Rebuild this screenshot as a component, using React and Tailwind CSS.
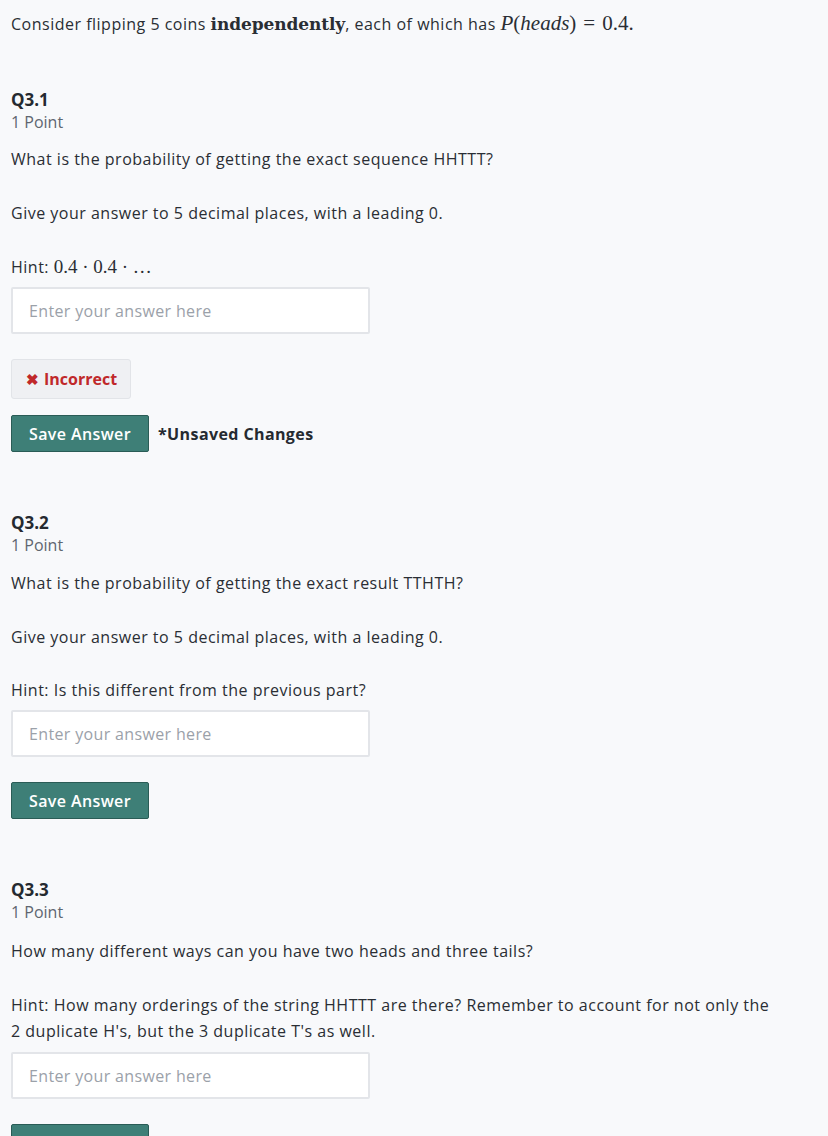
import React from "react";

const sans = { fontFamily: "'Open Sans', Lato, sans-serif" };

function Input() {
  return (
    <div className="w-[359px] h-[47px] bg-white border-2 border-[#e3e5e9] rounded-[2px] flex items-center pl-[16px] text-[16px] tracking-[0.35px] text-[#9ba1a9]">
      Enter your answer here
    </div>
  );
}

function SaveButton({ children }) {
  return (
    <div className="flex items-center gap-[9px]">
      <div className="w-[138px] h-[37px] bg-[#3e7f77] border border-[#2a5c56] rounded-[2px] flex items-center justify-center text-white font-semibold text-[16px] tracking-[0.4px]">
        Save Answer
      </div>
      {children}
    </div>
  );
}

function Header({ q }) {
  return (
    <div className="flex flex-col">
      <div className="text-[17px] font-bold text-[#252a30] leading-[22px]">{q}</div>
      <div className="text-[16px] text-[#5f6670] leading-[22px]">1 Point</div>
    </div>
  );
}

const math = "font-['Liberation_Serif',serif] tracking-normal";
const body = "text-[16px] leading-[26px] tracking-[0.5px]";

export default function App() {
  return (
    <div className="min-h-[1136px] bg-[#f8f9fb] text-[#2a2e34] pl-[11px] pt-[10px]" style={sans}>
      <p className={body}>
        Consider flipping 5 coins{" "}
        <span className="font-['DejaVu_Serif',serif] font-bold text-[17px] tracking-[-0.1px]">independently</span>, each of which has{" "}
        <span className={`${math} text-[21px] tracking-[0.8px]`}>
          <i>P</i>(<i>heads</i>)<span className="mx-[7px]">=</span>0.4.
        </span>
      </p>

      <div className="mt-[52px]">
        <Header q="Q3.1" />
        <p className={`mt-[13px] ${body}`}>What is the probability of getting the exact sequence HHTTT?</p>
        <p className={`mt-[28px] ${body}`}>Give your answer to 5 decimal places, with a leading 0.</p>
        <p className={`mt-[28px] ${body}`}>
          Hint: <span className={`${math} text-[19px]`}>0.4 · 0.4 · …</span>
        </p>
        <div className="mt-[7px]"><Input /></div>
        <div className="mt-[25px] w-[120px] h-[40px] bg-[#eff0f3] border border-[#e2e4e8] rounded-[3px] flex items-center pl-[14px] text-[16px] font-bold text-[#c0282a]">
          <span className="mr-[5px] text-[15px]">✖</span>Incorrect
        </div>
        <div className="mt-[16px]">
          <SaveButton>
            <span className="font-bold text-[16px] tracking-[0.4px] text-[#252a30]">*Unsaved Changes</span>
          </SaveButton>
        </div>
      </div>

      <div className="mt-[60px]">
        <Header q="Q3.2" />
        <p className={`mt-[14px] ${body}`}>What is the probability of getting the exact result TTHTH?</p>
        <p className={`mt-[28px] ${body}`}>Give your answer to 5 decimal places, with a leading 0.</p>
        <p className={`mt-[27px] ${body}`}>Hint: Is this different from the previous part?</p>
        <div className="mt-[7px]"><Input /></div>
        <div className="mt-[25px]"><SaveButton /></div>
      </div>

      <div className="mt-[60px]">
        <Header q="Q3.3" />
        <p className={`mt-[15px] ${body}`}>How many different ways can you have two heads and three tails?</p>
        <p className={`mt-[28px] ${body} max-w-[762px]`}>
          Hint: How many orderings of the string HHTTT are there? Remember to account for not only the 2 duplicate H's, but the 3 duplicate T's as well.
        </p>
        <div className="mt-[8px]"><Input /></div>
        <div className="mt-[25px]"><SaveButton /></div>
      </div>
    </div>
  );
}
